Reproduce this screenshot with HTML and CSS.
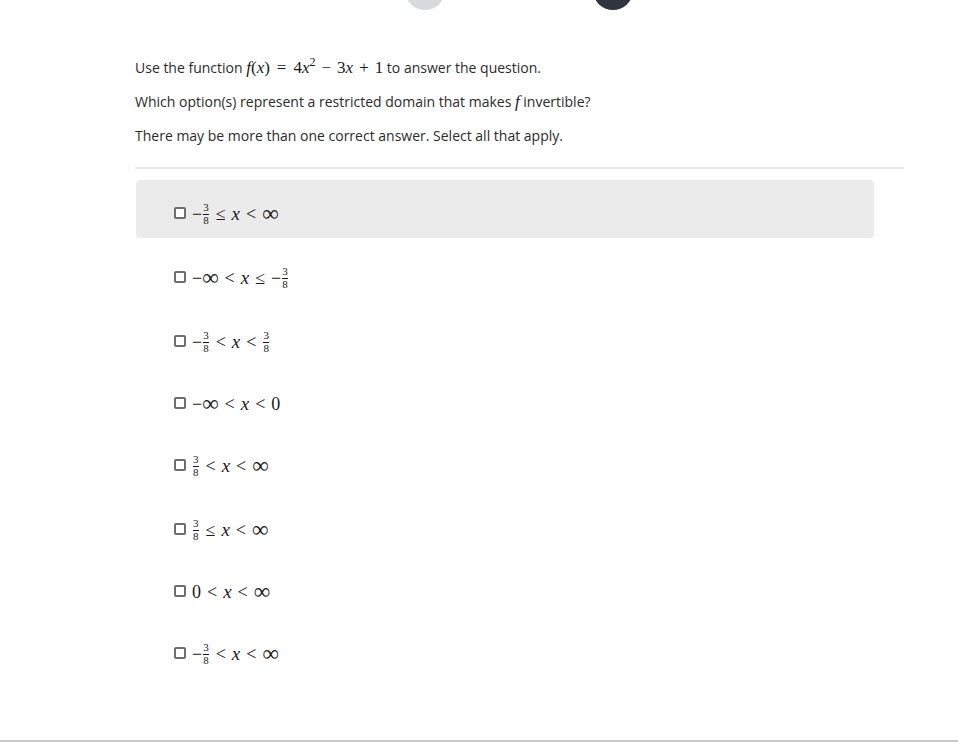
FILE: index.html
```html
<!DOCTYPE html>
<html lang="en">
<head>
<meta charset="utf-8">
<title>Question</title>
<link rel="stylesheet" href="styles.css">
</head>
<body>
<div class="page">
  <div class="steps">
    <span class="dot dot--light"></span>
    <span class="dot dot--dark"></span>
  </div>
  <main class="question">
    <p class="prompt">Use the function <span class="math"><i>f</i>(<i>x</i>)<span class="rel">=</span>4<i>x</i><sup>2</sup><span class="bin">−</span>3<i>x</i><span class="bin">+</span>1</span> to answer the question.</p>
    <p class="prompt">Which option(s) represent a restricted domain that makes <span class="math"><i>f</i></span> invertible?</p>
    <p class="prompt">There may be more than one correct answer. Select all that apply.</p>
    <hr class="divider">
    <ul class="options">
      <li class="option option--active">
        <span class="cb"></span>
        <span class="m">
          <span class="sym">−</span><span class="frac"><span class="num">3</span><span class="bar"></span><span class="den">8</span></span>
          <span class="sym rel">≤</span><span class="sym var">x</span><span class="sym rel">&lt;</span><span class="sym inf">∞</span>
        </span>
      </li>
      <li class="option">
        <span class="cb"></span>
        <span class="m">
          <span class="sym">−</span><span class="sym inf">∞</span><span class="sym rel">&lt;</span><span class="sym var">x</span><span class="sym rel">≤</span><span class="sym">−</span><span class="frac"><span class="num">3</span><span class="bar"></span><span class="den">8</span></span>
        </span>
      </li>
      <li class="option">
        <span class="cb"></span>
        <span class="m">
          <span class="sym">−</span><span class="frac"><span class="num">3</span><span class="bar"></span><span class="den">8</span></span><span class="sym rel">&lt;</span><span class="sym var">x</span><span class="sym rel">&lt;</span><span class="frac"><span class="num">3</span><span class="bar"></span><span class="den">8</span></span>
        </span>
      </li>
      <li class="option">
        <span class="cb"></span>
        <span class="m">
          <span class="sym">−</span><span class="sym inf">∞</span><span class="sym rel">&lt;</span><span class="sym var">x</span><span class="sym rel">&lt;</span><span class="sym">0</span>
        </span>
      </li>
      <li class="option">
        <span class="cb"></span>
        <span class="m">
          <span class="frac"><span class="num">3</span><span class="bar"></span><span class="den">8</span></span><span class="sym rel">&lt;</span><span class="sym var">x</span><span class="sym rel">&lt;</span><span class="sym inf">∞</span>
        </span>
      </li>
      <li class="option">
        <span class="cb"></span>
        <span class="m">
          <span class="frac"><span class="num">3</span><span class="bar"></span><span class="den">8</span></span><span class="sym rel">≤</span><span class="sym var">x</span><span class="sym rel">&lt;</span><span class="sym inf">∞</span>
        </span>
      </li>
      <li class="option">
        <span class="cb"></span>
        <span class="m">
          <span class="sym">0</span><span class="sym rel">&lt;</span><span class="sym var">x</span><span class="sym rel">&lt;</span><span class="sym inf">∞</span>
        </span>
      </li>
      <li class="option">
        <span class="cb"></span>
        <span class="m">
          <span class="sym">−</span><span class="frac"><span class="num">3</span><span class="bar"></span><span class="den">8</span></span><span class="sym rel">&lt;</span><span class="sym var">x</span><span class="sym rel">&lt;</span><span class="sym inf">∞</span>
        </span>
      </li>
    </ul>
  </main>
</div>
</body>
</html>
```

FILE: styles.css
```css
html, body {
  margin: 0;
  padding: 0;
  background: #ffffff;
}

.page {
  height: 742px;
  box-sizing: border-box;
  border-bottom: 2px solid #c6cbd0;
  overflow: hidden;
  font-family: "Open Sans", "Liberation Sans", sans-serif;
  color: #2b2b2b;
}

.steps {
  height: 10px;
  display: flex;
  gap: 148px;
  padding-left: 405px;
}

.dot {
  display: block;
  width: 40px;
  height: 40px;
  border-radius: 50%;
  margin-top: -30px;
  flex: none;
}

.dot--light { background: #d8dadd; }
.dot--dark { background: #2f343e; }

.question {
  padding: 48px 0 0 135px;
  width: 769px;
}

.prompt {
  margin: 0 0 14px;
  font-size: 14px;
  line-height: 20px;
}

.math {
  font-family: "Liberation Serif", serif;
  font-size: 17px;
  color: #1a1a1a;
}

.math i { font-style: italic; }

.math sup {
  font-size: 12px;
  vertical-align: 7px;
  line-height: 0;
}

.math .rel { margin: 0 7px; }
.math .bin { margin: 0 6px; }

.divider {
  border: 0;
  height: 2px;
  background: #e9e9e9;
  margin: 21px 0 11px;
}

.options {
  list-style: none;
  margin: 0 0 0 1px;
  padding: 0;
  width: 738px;
}

.option {
  display: flex;
  align-items: center;
  gap: 6px;
  padding: 22px 0 12px 38px;
  margin-bottom: 6px;
  border-radius: 4px;
  min-height: 20px;
}

.option--active { background: #ebebeb; }

.cb {
  display: block;
  width: 12px;
  height: 12px;
  box-sizing: border-box;
  border: 2px solid #6e6e6e;
  border-radius: 2px;
  background: #fff;
  flex: none;
  margin-bottom: 2px;
}

.m {
  display: flex;
  align-items: center;
  font-family: "Liberation Serif", serif;
  font-size: 18px;
  line-height: 20px;
  color: #1a1a1a;
}

.sym { display: block; }
.var { font-style: italic; font-size: 19px; }
.rel { margin: 0 6px; }
.inf { font-size: 23px; }

.frac {
  display: flex;
  flex-direction: column;
  align-items: center;
  justify-content: center;
  height: 24px;
  font-size: 11px;
  line-height: 11px;
  padding: 0 1px;
}

.bar {
  display: block;
  align-self: stretch;
  height: 1px;
  background: #1a1a1a;
  margin: 0.5px 0;
}
```
